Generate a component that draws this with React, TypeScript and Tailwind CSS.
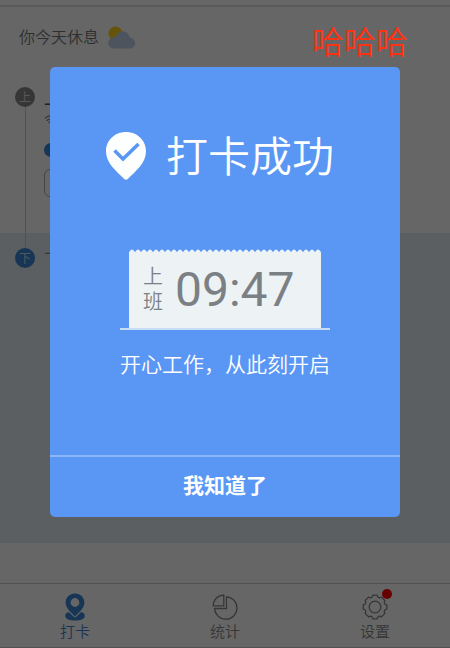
import { Wifi } from "lucide-react";

const tabs = [
  { label: "打卡", icon: <PinIcon />, active: true, badge: false },
  { label: "统计", icon: <PieIcon />, active: false, badge: false },
  { label: "设置", icon: <GearIcon />, active: false, badge: true },
];

function PinIcon() {
  return (
    <svg viewBox="0 0 24 28" className="h-7 w-6" fill="currentColor" aria-hidden="true">
      <path d="M6 19C3.500 19.500 2.200 21 2.200 22.800c0 3.500 4.600 4.700 9.800 4.700s9.800-1.200 9.800-4.700c0-1.800-1.300-3.300-3.800-3.800-1.600 2-3.500 3.800-6 5.600-2.500-1.800-4.400-3.600-6-5.600Z" />
      <path
        fillRule="evenodd"
        d="M12 .5C6.700 .5 2.600 4.400 2.600 9.600c0 5.300 4.700 9.600 9.400 13.800 4.700-4.200 9.400-8.500 9.400-13.800C21.400 4.400 17.300 .5 12 .5Zm0 4.600a4.400 4.400 0 1 1 0 8.800 4.400 4.400 0 0 1 0-8.800Z"
      />
    </svg>
  );
}

function PieIcon() {
  return (
    <svg viewBox="0 0 26 26" className="size-[26px]" fill="none" stroke="currentColor" strokeWidth="1.3" aria-hidden="true">
      <path d="M14.500 2.800V14.500H2.600A11.200 11.200 0 1 0 14.500 2.800Z" />
      <path d="M11.800 1.200v10.600H1.200C1.200 5.900 5.900 1.200 11.800 1.200Z" />
    </svg>
  );
}

function GearIcon() {
  return (
    <svg viewBox="0 0 26 26" className="size-[26px]" fill="none" stroke="currentColor" strokeWidth="1.3" strokeLinejoin="round" aria-hidden="true">
      <path d="M10.800 1.200h4.400c0 2.300 2.500 3.300 4.200 1.900l3.500 3.500c-1.400 1.700-.4 4.200 1.900 4.200v4.400c-2.300 0-3.300 2.500-1.900 4.200l-3.500 3.500c-1.700-1.400-4.200-.4-4.200 1.900h-4.400c0-2.300-2.500-3.300-4.200-1.900l-3.500-3.500c1.400-1.700.4-4.200-1.900-4.200v-4.400c2.300 0 3.300-2.500 1.900-4.200l3.500-3.500c1.700 1.400 4.200.4 4.200-1.900Z" />
      <circle cx="13" cy="13" r="5.800" />
    </svg>
  );
}

function WeatherIcon() {
  return (
    <svg viewBox="0 0 30 24" className="h-6 w-[30px]" aria-hidden="true">
      <circle cx="8.500" cy="7.500" r="7" fill="#ffd21f" />
      <path d="M7 22.500a5.500 5.500 0 0 1-.6-11C8 11 9 10 10.300 8.200c2-3.600 8.700-4.500 11.500.8.800 1.700 1.200 2.600 2.700 3.300A5.300 5.300 0 0 1 24 22.500Z" fill="#c3d1ea" />
    </svg>
  );
}

function Marker({ text, className }: { text: string; className: string }) {
  return (
    <span className={`flex size-5 shrink-0 items-center justify-center rounded-full text-xs leading-none text-white/70 ${className}`}>
      {text}
    </span>
  );
}

function Ticket() {
  return (
    <div className="mx-[70px] mt-[65px] border-b-2 border-[#c8dcf8] px-[9px]">
      <svg className="block h-[3px] w-full" aria-hidden="true">
        <defs>
          <pattern id="teeth" width="6" height="3" patternUnits="userSpaceOnUse">
            <path d="M0 3C1 3 1 .5 3 .5S5 3 6 3Z" fill="#edf3f5" />
          </pattern>
        </defs>
        <rect width="100%" height="3" fill="url(#teeth)" />
      </svg>
      <div className="flex h-[76px] items-center gap-3 bg-[#edf3f5] pl-3.5 text-[#7b8084]">
        <span className="w-5 pb-1 text-xl leading-[25px] font-[350]">上班</span>
        <time className="font-[Roboto,sans-serif] text-5xl leading-none">09:47</time>
      </div>
    </div>
  );
}

function SuccessDialog() {
  return (
    <div role="dialog" aria-modal="true" aria-labelledby="dialog-title" className="w-full rounded-[5px] bg-[#5a97f5] text-white">
      <div className="flex items-center justify-center gap-[19px] pt-[57px] pr-[11px]">
        <svg viewBox="0 0 42 50" className="mt-1 h-[50px] w-[42px]" aria-hidden="true">
          <path d="M21 1C9.500 1 1 9.500 1 20.500c0 12 11 20 18 27.300q2 2 4 0C30 40.500 41 32.500 41 20.500 41 9.500 32.500 1 21 1Z" fill="#fcfffe" />
          <path d="m9.500 19.500 8.500 8.500 15.500-15" fill="none" stroke="#5a97f5" strokeWidth="3.500" />
        </svg>
        <h1 id="dialog-title" className="text-[42px] leading-[60px] font-[350]">打卡成功</h1>
      </div>
      <Ticket />
      <p className="mt-[17px] text-center text-[21px] leading-8 font-[350]">开心工作，从此刻开启</p>
      <button type="button" className="mt-[76px] h-[62px] w-full border-t-2 border-[#8db6f9] pb-1 text-[21px] font-bold">
        我知道了
      </button>
    </div>
  );
}

export default function App() {
  return (
    <div className="relative flex min-h-screen flex-col bg-white font-['Noto_Sans_CJK_SC',sans-serif] text-[#555]">
      <header className="mt-[5px] flex h-[63px] items-center gap-2 border-t-2 border-[#dedede] pl-[19px]">
        <span className="pb-1 text-base font-[350] text-[#777]">你今天休息</span>
        <WeatherIcon />
      </header>

      <main className="flex grow flex-col">
        <section className="flex h-[165px] gap-[9px] pt-[19px] pl-[15px]">
          <div className="flex flex-col items-center">
            <Marker text="上" className="bg-[#888]" />
            <span className="w-px grow bg-[#ccc]" />
          </div>
          <div>
            <h2 className="text-base leading-5 font-medium">上班</h2>
            <Wifi className="mt-1.5 size-3.5 text-[#888]" />
            <span className="mt-4 block size-3.5 rounded-full bg-[#3b87d4]" />
            <span className="mt-3 block h-7 w-20 rounded-md border border-[#a3afbb]" />
          </div>
        </section>
        <section className="flex h-[310px] gap-[9px] bg-[#e4eef5] pl-[15px]">
          <div className="flex flex-col items-center">
            <span className="h-[15px] w-px bg-[#ccc]" />
            <Marker text="下" className="bg-[#3b87d4]" />
          </div>
          <h2 className="mt-[15px] text-base leading-5 text-[#888]">下班</h2>
        </section>
      </main>

      <nav className="flex h-[65px] border-y border-[#ccc]">
        {tabs.map((tab) => (
          <a
            key={tab.label}
            href="#"
            className={`flex flex-1 flex-col items-center pt-[9px] text-[15px] leading-5 font-[350] ${tab.active ? "text-[#3b87d4]" : "text-[#888]"}`}
          >
            <span className="relative flex h-7 items-center">
              {tab.icon}
              {tab.badge && <span className="absolute -top-1 -right-1 size-2.5 rounded-full bg-[#ff0000]" />}
            </span>
            {tab.label}
          </a>
        ))}
      </nav>

      <div className="absolute inset-0 bg-black/60 px-[50px] pt-[67px]">
        <SuccessDialog />
      </div>
      <span className="absolute top-4 right-[42px] text-[32px] leading-[48px] font-[350] text-[#ff3312]">哈哈哈</span>
    </div>
  );
}
